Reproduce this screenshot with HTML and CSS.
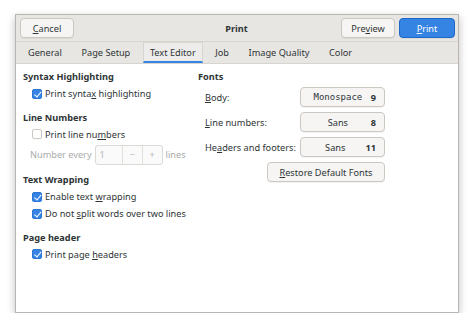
FILE: index.html
```html
<!DOCTYPE html>
<html lang="en">
<head>
  <meta charset="UTF-8" />
  <title>Print</title>
  <link rel="stylesheet" href="styles.css">
</head>
<body>
  <div class="window">
    <div class="headerbar">
      <button class="btn"><u>C</u>ancel</button>
      <div class="title">Print</div>
      <button class="btn">Pre<u>v</u>iew</button>
      <button class="btn suggested"><u>P</u>rint</button>
    </div>

    <div class="tabs">
      <div class="tab">General</div>
      <div class="tab">Page Setup</div>
      <div class="tab active">Text Editor</div>
      <div class="tab">Job</div>
      <div class="tab">Image Quality</div>
      <div class="tab">Color</div>
    </div>

    <div class="content">
      <div class="col-left">
        <div class="section">
          <div class="heading">Syntax Highlighting</div>
          <label class="check"><span class="box checked"></span><span>Print synta<u>x</u> highlighting</span></label>
        </div>

        <div class="section">
          <div class="heading">Line Numbers</div>
          <label class="check"><span class="box"></span><span>Print line nu<u>m</u>bers</span></label>
          <div class="spin-row">
            <span class="dim">Number every</span>
            <div class="spin">
              <span class="spin-val">1</span>
              <span class="spin-btn">&minus;</span>
              <span class="spin-btn">+</span>
            </div>
            <span class="dim">lines</span>
          </div>
        </div>

        <div class="section">
          <div class="heading">Text Wrapping</div>
          <label class="check"><span class="box checked"></span><span>Enable text <u>w</u>rapping</span></label>
          <label class="check"><span class="box checked"></span><span>Do not <u>s</u>plit words over two lines</span></label>
        </div>

        <div class="section last">
          <div class="heading">Page header</div>
          <label class="check"><span class="box checked"></span><span>Print page <u>h</u>eaders</span></label>
        </div>
      </div>

      <div class="col-right">
        <div class="heading">Fonts</div>
        <div class="font-row">
          <span class="font-label"><u>B</u>ody:</span>
          <button class="btn font-btn"><span class="mono">Monospace</span><span class="size">9</span></button>
        </div>
        <div class="font-row">
          <span class="font-label"><u>L</u>ine numbers:</span>
          <button class="btn font-btn"><span class="sans">Sans</span><span class="size">8</span></button>
        </div>
        <div class="font-row">
          <span class="font-label">He<u>a</u>ders and footers:</span>
          <button class="btn font-btn"><span class="sans">Sans</span><span class="size">11</span></button>
        </div>
        <div class="restore-row">
          <button class="btn restore"><u>R</u>estore Default Fonts</button>
        </div>
      </div>
    </div>
  </div>
</body>
</html>
```

FILE: styles.css
```css
body {
  margin: 0;
  background: #fff;
  font-family: "Noto Sans", sans-serif;
  font-size: 9.2px;
  color: #2e3436;
}
u {
  text-decoration-thickness: 1px;
  text-underline-offset: 1px;
}
.window {
  margin: 14px 0 0 15px;
  width: 444px;
  height: 299px;
  box-sizing: border-box;
  border: 1px solid #b9b6b2;
  background: #fff;
  box-shadow: 0 3px 8px rgba(0,0,0,0.25);
  display: flex;
  flex-direction: column;
}
.headerbar {
  height: 26px;
  background: #e8e6e3;
  border-bottom: 1px solid #d8d4d0;
  display: flex;
  align-items: center;
  padding: 0 3px 0 4px;
}
.title {
  flex: 1;
  text-align: center;
  font-weight: bold;
  padding-left: 58px;
}
.btn {
  font-family: inherit;
  font-size: 9.2px;
  color: #2e3436;
  background: #f6f5f4;
  border: 1px solid #cdc7c2;
  border-radius: 4px;
  height: 20px;
  padding: 0 12px;
  box-shadow: 0 1px rgba(0,0,0,0.05);
}
.headerbar .btn {
  width: 54px;
  padding: 0;
}
.headerbar .btn + .btn {
  margin-left: 4px;
}
.btn.suggested {
  background: #3584e4;
  border-color: #1c68c7;
  color: #fff;
  width: 56px;
}
.tabs {
  height: 21px;
  background: #e8e6e3;
  border-bottom: 1px solid #d8d4d0;
  display: flex;
  padding-left: 5px;
  gap: 5.6px;
}
.tab {
  padding: 2px 7px 0;
  line-height: 17px;
  color: #2e3436;
  box-sizing: border-box;
  border-bottom: 2px solid transparent;
}
.tab.active {
  background: #eeecea;
  border: 1px solid #d8d4d0;
  border-bottom: 2px solid #3584e4;
  padding: 1px 6px 0;
}
.content {
  flex: 1;
  display: flex;
  padding: 5px 0 0 7px;
}
.col-left {
  width: 175px;
}
.col-right {
  width: 187px;
}
.heading {
  font-weight: bold;
  line-height: 16px;
}
.section {
  margin-bottom: 7.5px;
}
.section.last {
  margin-top: 1.5px;
}
.check {
  display: flex;
  align-items: center;
  height: 17px;
  padding-left: 9px;
  white-space: nowrap;
}
.box {
  width: 10px;
  height: 10px;
  box-sizing: border-box;
  border: 1px solid #cdc7c2;
  border-radius: 2px;
  background: #fff;
  margin-right: 3px;
  flex-shrink: 0;
}
.box.checked {
  background: #3584e4;
  border-color: #2a76d6;
  position: relative;
}
.box.checked::after {
  content: "";
  position: absolute;
  left: 2.5px;
  top: 0px;
  width: 2.5px;
  height: 5.5px;
  border: solid #fff;
  border-width: 0 1.5px 1.5px 0;
  transform: rotate(40deg);
}
.spin-row {
  display: flex;
  align-items: center;
  height: 20px;
  margin-top: 2px;
  padding-left: 7px;
  gap: 3px;
  white-space: nowrap;
}
.dim {
  color: #a9abaa;
}
.spin {
  display: flex;
  height: 20px;
  width: 68px;
  box-sizing: border-box;
  border: 1px solid #dcd8d4;
  border-radius: 3px;
  background: #fafafa;
  color: #b8b9b8;
}
.spin-val {
  flex: 1;
  padding-left: 4px;
  line-height: 18px;
}
.spin-btn {
  width: 19px;
  text-align: center;
  line-height: 18px;
  border-left: 1px solid #e2dfdc;
}
.font-row {
  display: flex;
  align-items: center;
  justify-content: space-between;
  height: 20px;
  margin-top: 2px;
  margin-bottom: 5px;
  padding-left: 7px;
  white-space: nowrap;
}
.font-btn {
  width: 85px;
  display: flex;
  align-items: center;
  padding: 0 8px 0 10px;
}
.mono {
  font-family: "DejaVu Sans Mono", monospace;
  font-size: 9px;
  flex: 1;
  text-align: center;
}
.sans {
  flex: 1;
  text-align: center;
}
.size {
  font-weight: bold;
  margin-left: 6px;
}
.restore-row {
  display: flex;
  justify-content: flex-end;
}
.btn.restore {
  width: 118px;
  padding: 0;
}
```
